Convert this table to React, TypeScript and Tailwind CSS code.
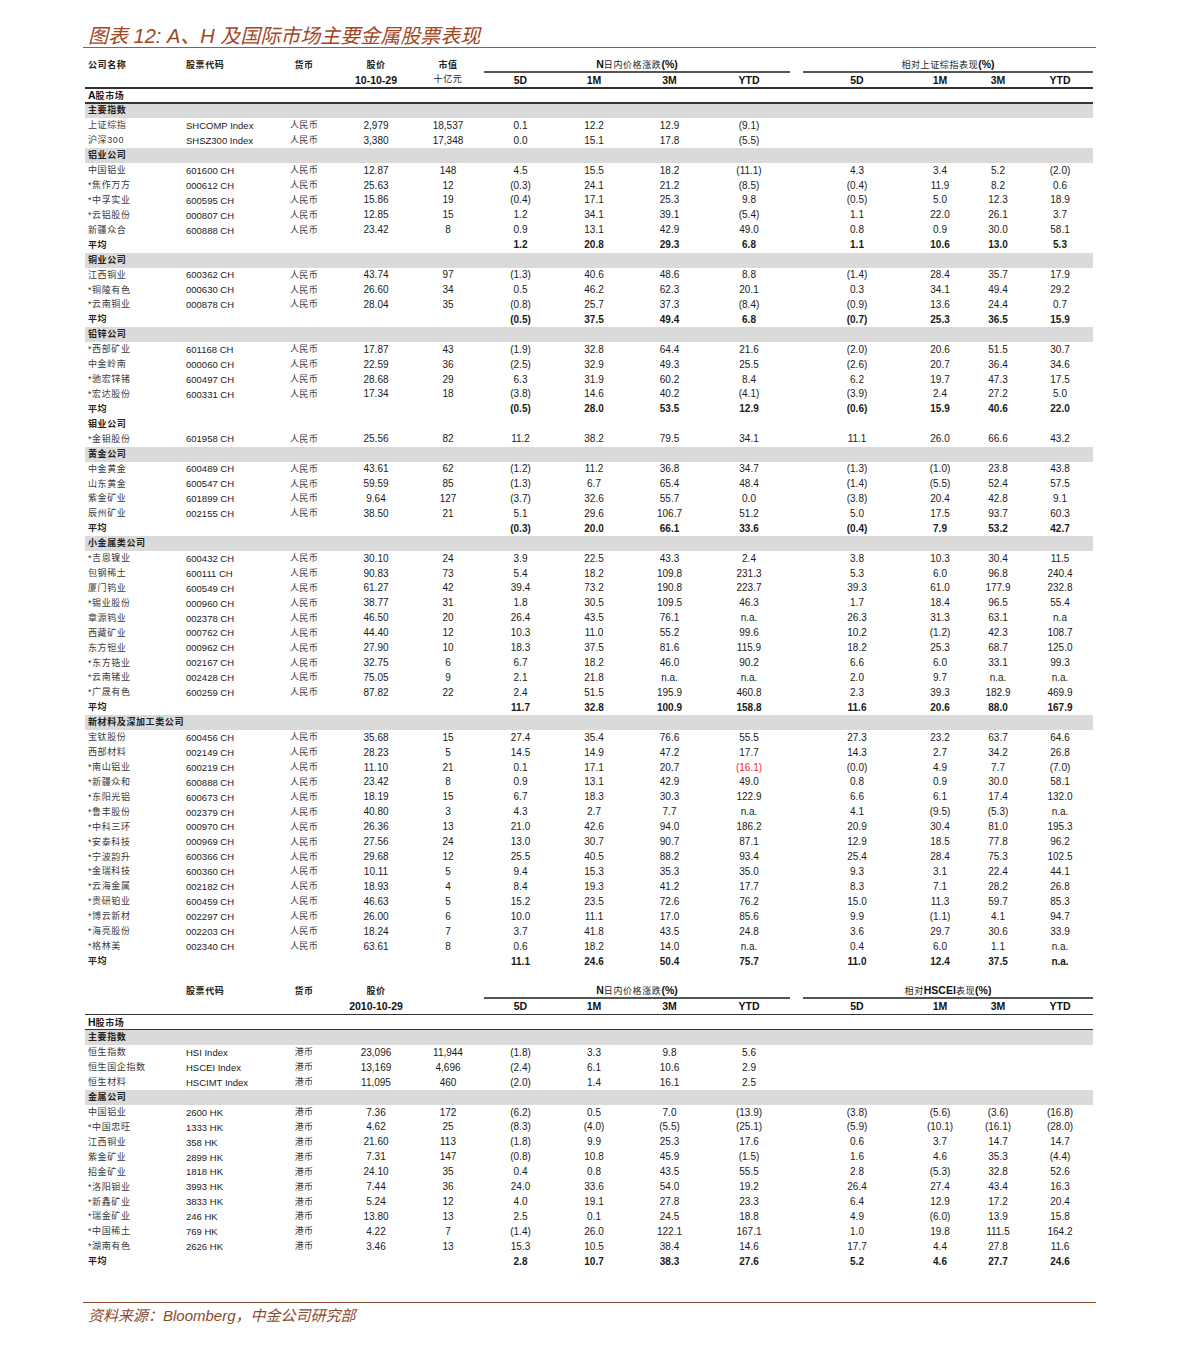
import React from "react";

const GRID =
  "grid grid-cols-[98px_85px_72px_72px_72px_73px_74px_77px_82px_13px_108px_58px_58px_66px]";

type R =
  | { t: "sec"; label: string; gray: boolean }
  | { t: "d"; name: string; code: string; cur: string; price: string; cap: string; v: string[] }
  | { t: "avg"; v: string[] };

const sec = (label: string, gray = true): R => ({ t: "sec", label, gray });
const avg = (s: string): R => ({ t: "avg", v: s.split(" ") });
const mk =
  (cur: string) =>
  (name: string, code: string, price: string, cap: string, s: string): R => ({
    t: "d",
    name,
    code,
    cur,
    price,
    cap,
    v: s.split(" "),
  });
const a = mk("人民币");
const h = mk("港币");

const A_ROWS: R[] = [
  sec("主要指数"),
  a("上证综指", "SHCOMP Index", "2,979", "18,537", "0.1 12.2 12.9 (9.1)"),
  a("沪深300", "SHSZ300 Index", "3,380", "17,348", "0.0 15.1 17.8 (5.5)"),
  sec("铝业公司"),
  a("中国铝业", "601600 CH", "12.87", "148", "4.5 15.5 18.2 (11.1) 4.3 3.4 5.2 (2.0)"),
  a("*焦作万方", "000612 CH", "25.63", "12", "(0.3) 24.1 21.2 (8.5) (0.4) 11.9 8.2 0.6"),
  a("*中孚实业", "600595 CH", "15.86", "19", "(0.4) 17.1 25.3 9.8 (0.5) 5.0 12.3 18.9"),
  a("*云铝股份", "000807 CH", "12.85", "15", "1.2 34.1 39.1 (5.4) 1.1 22.0 26.1 3.7"),
  a("新疆众合", "600888 CH", "23.42", "8", "0.9 13.1 42.9 49.0 0.8 0.9 30.0 58.1"),
  avg("1.2 20.8 29.3 6.8 1.1 10.6 13.0 5.3"),
  sec("铜业公司"),
  a("江西铜业", "600362 CH", "43.74", "97", "(1.3) 40.6 48.6 8.8 (1.4) 28.4 35.7 17.9"),
  a("*铜陵有色", "000630 CH", "26.60", "34", "0.5 46.2 62.3 20.1 0.3 34.1 49.4 29.2"),
  a("*云南铜业", "000878 CH", "28.04", "35", "(0.8) 25.7 37.3 (8.4) (0.9) 13.6 24.4 0.7"),
  avg("(0.5) 37.5 49.4 6.8 (0.7) 25.3 36.5 15.9"),
  sec("铅锌公司"),
  a("*西部矿业", "601168 CH", "17.87", "43", "(1.9) 32.8 64.4 21.6 (2.0) 20.6 51.5 30.7"),
  a("中金岭南", "000060 CH", "22.59", "36", "(2.5) 32.9 49.3 25.5 (2.6) 20.7 36.4 34.6"),
  a("*驰宏锌锗", "600497 CH", "28.68", "29", "6.3 31.9 60.2 8.4 6.2 19.7 47.3 17.5"),
  a("*宏达股份", "600331 CH", "17.34", "18", "(3.8) 14.6 40.2 (4.1) (3.9) 2.4 27.2 5.0"),
  avg("(0.5) 28.0 53.5 12.9 (0.6) 15.9 40.6 22.0"),
  sec("钼业公司", false),
  a("*金钼股份", "601958 CH", "25.56", "82", "11.2 38.2 79.5 34.1 11.1 26.0 66.6 43.2"),
  sec("黄金公司"),
  a("中金黄金", "600489 CH", "43.61", "62", "(1.2) 11.2 36.8 34.7 (1.3) (1.0) 23.8 43.8"),
  a("山东黄金", "600547 CH", "59.59", "85", "(1.3) 6.7 65.4 48.4 (1.4) (5.5) 52.4 57.5"),
  a("紫金矿业", "601899 CH", "9.64", "127", "(3.7) 32.6 55.7 0.0 (3.8) 20.4 42.8 9.1"),
  a("辰州矿业", "002155 CH", "38.50", "21", "5.1 29.6 106.7 51.2 5.0 17.5 93.7 60.3"),
  avg("(0.3) 20.0 66.1 33.6 (0.4) 7.9 53.2 42.7"),
  sec("小金属类公司"),
  a("*吉恩镍业", "600432 CH", "30.10", "24", "3.9 22.5 43.3 2.4 3.8 10.3 30.4 11.5"),
  a("包钢稀土", "600111 CH", "90.83", "73", "5.4 18.2 109.8 231.3 5.3 6.0 96.8 240.4"),
  a("厦门钨业", "600549 CH", "61.27", "42", "39.4 73.2 190.8 223.7 39.3 61.0 177.9 232.8"),
  a("*锡业股份", "000960 CH", "38.77", "31", "1.8 30.5 109.5 46.3 1.7 18.4 96.5 55.4"),
  a("章源钨业", "002378 CH", "46.50", "20", "26.4 43.5 76.1 n.a. 26.3 31.3 63.1 n.a"),
  a("西藏矿业", "000762 CH", "44.40", "12", "10.3 11.0 55.2 99.6 10.2 (1.2) 42.3 108.7"),
  a("东方钽业", "000962 CH", "27.90", "10", "18.3 37.5 81.6 115.9 18.2 25.3 68.7 125.0"),
  a("*东方锆业", "002167 CH", "32.75", "6", "6.7 18.2 46.0 90.2 6.6 6.0 33.1 99.3"),
  a("*云南锗业", "002428 CH", "75.05", "9", "2.1 21.8 n.a. n.a. 2.0 9.7 n.a. n.a."),
  a("*广晟有色", "600259 CH", "87.82", "22", "2.4 51.5 195.9 460.8 2.3 39.3 182.9 469.9"),
  avg("11.7 32.8 100.9 158.8 11.6 20.6 88.0 167.9"),
  sec("新材料及深加工类公司"),
  a("宝钛股份", "600456 CH", "35.68", "15", "27.4 35.4 76.6 55.5 27.3 23.2 63.7 64.6"),
  a("西部材料", "002149 CH", "28.23", "5", "14.5 14.9 47.2 17.7 14.3 2.7 34.2 26.8"),
  a("*南山铝业", "600219 CH", "11.10", "21", "0.1 17.1 20.7 !(16.1) (0.0) 4.9 7.7 (7.0)"),
  a("*新疆众和", "600888 CH", "23.42", "8", "0.9 13.1 42.9 49.0 0.8 0.9 30.0 58.1"),
  a("*东阳光铝", "600673 CH", "18.19", "15", "6.7 18.3 30.3 122.9 6.6 6.1 17.4 132.0"),
  a("*鲁丰股份", "002379 CH", "40.80", "3", "4.3 2.7 7.7 n.a. 4.1 (9.5) (5.3) n.a."),
  a("*中科三环", "000970 CH", "26.36", "13", "21.0 42.6 94.0 186.2 20.9 30.4 81.0 195.3"),
  a("*安泰科技", "000969 CH", "27.56", "24", "13.0 30.7 90.7 87.1 12.9 18.5 77.8 96.2"),
  a("*宁波韵升", "600366 CH", "29.68", "12", "25.5 40.5 88.2 93.4 25.4 28.4 75.3 102.5"),
  a("*金瑞科技", "600360 CH", "10.11", "5", "9.4 15.3 35.3 35.0 9.3 3.1 22.4 44.1"),
  a("*云海金属", "002182 CH", "18.93", "4", "8.4 19.3 41.2 17.7 8.3 7.1 28.2 26.8"),
  a("*贵研铂业", "600459 CH", "46.63", "5", "15.2 23.5 72.6 76.2 15.0 11.3 59.7 85.3"),
  a("*博云新材", "002297 CH", "26.00", "6", "10.0 11.1 17.0 85.6 9.9 (1.1) 4.1 94.7"),
  a("*海亮股份", "002203 CH", "18.24", "7", "3.7 41.8 43.5 24.8 3.6 29.7 30.6 33.9"),
  a("*格林美", "002340 CH", "63.61", "8", "0.6 18.2 14.0 n.a. 0.4 6.0 1.1 n.a."),
  avg("11.1 24.6 50.4 75.7 11.0 12.4 37.5 n.a."),
];

const H_ROWS: R[] = [
  sec("主要指数"),
  h("恒生指数", "HSI Index", "23,096", "11,944", "(1.8) 3.3 9.8 5.6"),
  h("恒生国企指数", "HSCEI Index", "13,169", "4,696", "(2.4) 6.1 10.6 2.9"),
  h("恒生材料", "HSCIMT Index", "11,095", "460", "(2.0) 1.4 16.1 2.5"),
  sec("金属公司"),
  h("中国铝业", "2600 HK", "7.36", "172", "(6.2) 0.5 7.0 (13.9) (3.8) (5.6) (3.6) (16.8)"),
  h("*中国忠旺", "1333 HK", "4.62", "25", "(8.3) (4.0) (5.5) (25.1) (5.9) (10.1) (16.1) (28.0)"),
  h("江西铜业", "358 HK", "21.60", "113", "(1.8) 9.9 25.3 17.6 0.6 3.7 14.7 14.7"),
  h("紫金矿业", "2899 HK", "7.31", "147", "(0.8) 10.8 45.9 (1.5) 1.6 4.6 35.3 (4.4)"),
  h("招金矿业", "1818 HK", "24.10", "35", "0.4 0.8 43.5 55.5 2.8 (5.3) 32.8 52.6"),
  h("*洛阳钼业", "3993 HK", "7.44", "36", "24.0 33.6 54.0 19.2 26.4 27.4 43.4 16.3"),
  h("*新鑫矿业", "3833 HK", "5.24", "12", "4.0 19.1 27.8 23.3 6.4 12.9 17.2 20.4"),
  h("*瑞金矿业", "246 HK", "13.80", "13", "2.5 0.1 24.5 18.8 4.9 (6.0) 13.9 15.8"),
  h("*中国稀土", "769 HK", "4.22", "7", "(1.4) 26.0 122.1 167.1 1.0 19.8 111.5 164.2"),
  h("*湖南有色", "2626 HK", "3.46", "13", "15.3 10.5 38.4 14.6 17.7 4.4 27.8 11.6"),
  avg("2.8 10.7 38.3 27.6 5.2 4.6 27.7 24.6"),
];

function Num({ v, bold }: { v?: string; bold?: boolean }) {
  if (!v) return <div />;
  const red = v.startsWith("!");
  const txt = red ? v.slice(1) : v;
  return (
    <div
      className={`flex items-center justify-center text-[10px] whitespace-nowrap ${
        red ? "text-[#f01c1c]" : "text-[#1a1a1a]"
      } ${bold ? "font-bold" : ""}`}
    >
      {txt}
    </div>
  );
}

function Vals({ v, bold }: { v: string[]; bold?: boolean }) {
  return (
    <>
      <Num v={v[0]} bold={bold} />
      <Num v={v[1]} bold={bold} />
      <Num v={v[2]} bold={bold} />
      <Num v={v[3]} bold={bold} />
      <div />
      <Num v={v[4]} bold={bold} />
      <Num v={v[5]} bold={bold} />
      <Num v={v[6]} bold={bold} />
      <Num v={v[7]} bold={bold} />
    </>
  );
}

function Row({ r }: { r: R }) {
  if (r.t === "sec") {
    return (
      <div
        className={`h-[14.93px] flex items-center pl-[3px] text-[9px] font-bold tracking-[0.6px] text-[#222] whitespace-nowrap ${
          r.gray ? "bg-[#dadada]" : ""
        }`}
      >
        {r.label}
      </div>
    );
  }
  if (r.t === "avg") {
    return (
      <div className={`${GRID} h-[14.93px]`}>
        <div className="flex items-center pl-[3px] text-[9px] font-bold tracking-[0.6px] text-[#222]">
          平均
        </div>
        <div />
        <div />
        <div />
        <div />
        <Vals v={r.v} bold />
      </div>
    );
  }
  return (
    <div className={`${GRID} h-[14.93px]`}>
      <div className="flex items-center pl-[3px] text-[9px] tracking-[0.6px] text-[#3a3a3a] whitespace-nowrap">
        {r.name}
      </div>
      <div className="flex items-center pl-[3px] text-[9.5px] text-[#1a1a1a] whitespace-nowrap">
        {r.code}
      </div>
      <div className="flex items-center justify-center text-[9px] tracking-[0.3px] text-[#3a3a3a]">
        {r.cur}
      </div>
      <Num v={r.price} />
      <Num v={r.cap} />
      <Vals v={r.v} />
    </div>
  );
}

function Header({ first, group2, date }: { first: boolean; group2: string; date: string }) {
  const cj = "text-[9px] font-bold tracking-[0.6px] text-[#222] whitespace-nowrap";
  const bn = "flex items-center justify-center text-[10.5px] font-bold text-[#111]";
  const cjs = "text-[9px] tracking-[0.6px] text-[#222]";
  const lat = "text-[10.5px] font-bold text-[#111]";
  return (
    <>
      <div className={`${GRID} h-[15px]`}>
        <div className={`flex items-center pl-[3px] ${cj}`}>{first ? "公司名称" : ""}</div>
        <div className={`flex items-center pl-[3px] ${cj}`}>股票代码</div>
        <div className={`flex items-center justify-center ${cj}`}>货币</div>
        <div className={`flex items-center justify-center ${cj}`}>股价</div>
        <div className={`flex items-center justify-center ${cj}`}>{first ? "市值" : ""}</div>
        <div className="col-span-4 h-[15px] flex items-center justify-center border-b-2 border-[#555]">
          <div className="flex items-baseline whitespace-nowrap">
            <span className={lat}>N</span>
            <span className={cjs}>日内价格涨跌</span>
            <span className={lat}>(%)</span>
          </div>
        </div>
        <div />
        <div className="col-span-4 h-[15px] flex items-center justify-center border-b-2 border-[#555]">
          <div className="flex items-baseline whitespace-nowrap">
            {group2 === "SH" ? (
              <>
                <span className={cjs}>相对上证综指表现</span>
                <span className={lat}>(%)</span>
              </>
            ) : (
              <>
                <span className={cjs}>相对</span>
                <span className={lat}>HSCEI</span>
                <span className={cjs}>表现</span>
                <span className={lat}>(%)</span>
              </>
            )}
          </div>
        </div>
      </div>
      <div className={`${GRID} h-[14.5px]`}>
        <div />
        <div />
        <div />
        <div className={bn}>{date}</div>
        <div className="flex items-center justify-center text-[9px] tracking-[0.6px] text-[#222]">
          {first ? "十亿元" : ""}
        </div>
        <div className={bn}>5D</div>
        <div className={bn}>1M</div>
        <div className={bn}>3M</div>
        <div className={bn}>YTD</div>
        <div />
        <div className={bn}>5D</div>
        <div className={bn}>1M</div>
        <div className={bn}>3M</div>
        <div className={bn}>YTD</div>
      </div>
      <div className="h-[1.5px] bg-[#333]" />
    </>
  );
}

function Market({ label }: { label: string }) {
  return (
    <>
      <div className="h-[13.5px] flex items-center pl-[3px]">
        <div className="flex items-baseline">
          <span className="text-[10.5px] font-bold text-[#111]">{label[0]}</span>
          <span className="text-[9px] font-bold tracking-[0.6px] text-[#222]">{label.slice(1)}</span>
        </div>
      </div>
      <div className="h-[1.5px] bg-[#333]" />
    </>
  );
}

export default function App() {
  return (
    <div className="w-[1191px] h-[1345px] bg-white leading-none font-['Liberation_Sans','Noto_Sans_CJK_SC',sans-serif] overflow-hidden">
      <div className="ml-[83px] w-[1013px] pt-[25px] border-b-[1.5px] border-[#b5522a]">
        <div className="pl-[5px] leading-[22px] text-[20px] italic text-[#a2461f] whitespace-nowrap">
          图表 12: A、H 及国际市场主要金属股票表现
        </div>
      </div>
      <div className="ml-[85px] w-[1008px] mt-[9.5px]">
        <Header first group2="SH" date="10-10-29" />
        <Market label="A股市场" />
        {A_ROWS.map((r, i) => (
          <Row key={i} r={r} />
        ))}
        <div className="h-[15.5px]" />
        <Header first={false} group2="HS" date="2010-10-29" />
        <Market label="H股市场" />
        {H_ROWS.map((r, i) => (
          <Row key={i} r={r} />
        ))}
      </div>
      <div className="ml-[83px] w-[1013px] mt-[33px] border-t border-[#8a4a2e] pt-[3px]">
        <div className="pl-[5px] leading-[20px] text-[15px] italic text-[#8a4a2e] whitespace-nowrap">
          资料来源：Bloomberg，中金公司研究部
        </div>
      </div>
    </div>
  );
}
